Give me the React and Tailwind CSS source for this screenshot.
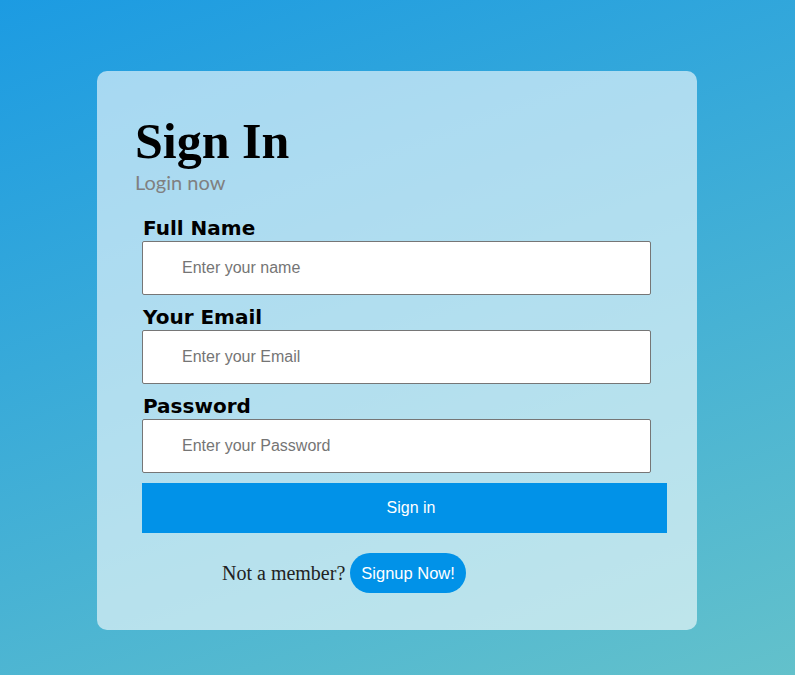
export default function App() {
    return (
        <div className="min-h-[675px] w-full bg-[linear-gradient(160deg,#1c9be2_0%,#63c1cb_100%)] pt-[71px] pb-[45px]">
            <div className="ml-[97px] w-[600px] rounded-[10px] bg-white/60 pt-[41px] pb-[37px]">
                <div className="pl-[38px]">
                    <h1 className="font-['Liberation_Serif',serif] text-[50px] font-bold leading-[58px] text-black">Sign In</h1>
                    <p className="font-['Lato',sans-serif] text-[20px] leading-[24px] text-[#808080]">Login now</p>
                </div>

                <form className="mt-[25px] ml-[45px] w-[525px]" onSubmit={e => e.preventDefault()}>
                    {[
                        ['Full Name', 'text', 'Enter your name'],
                        ['Your Email', 'email', 'Enter your Email'],
                        ['Password', 'password', 'Enter your Password'],
                    ].map(([label, type, ph], i) => (
                        <div key={label} className={i > 0 ? 'mt-[13px]' : ''}>
                            <label className="mb-[4px] block pl-px font-['DejaVu_Sans',sans-serif] text-[20px] font-bold leading-[18px] text-black">{label}</label>
                            <input
                                type={type}
                                placeholder={ph}
                                className="block h-[54px] w-[509px] rounded-[2px] border border-[#767676] bg-white pl-[39px] font-['Liberation_Sans',sans-serif] text-[16px] text-black outline-none placeholder:text-[#757575]"
                            />
                        </div>
                    ))}

                    <button type="submit" className="mt-[10px] h-[50px] w-[525px] bg-[#0192e8] pl-[13px] font-['Liberation_Sans',sans-serif] text-[16px] text-white">
                        Sign in
                    </button>
                </form>

                <div className="mt-[20px] flex items-center pl-[125px]">
                    <span className="font-['Liberation_Serif',serif] text-[20px] text-[#222]">Not a member?</span>
                    <button className="ml-[5px] h-[40px] rounded-full bg-[#0192e8] px-[11px] font-['Liberation_Sans',sans-serif] text-[16.5px] text-white">
                        Signup Now!
                    </button>
                </div>
            </div>
        </div>
    );
}
